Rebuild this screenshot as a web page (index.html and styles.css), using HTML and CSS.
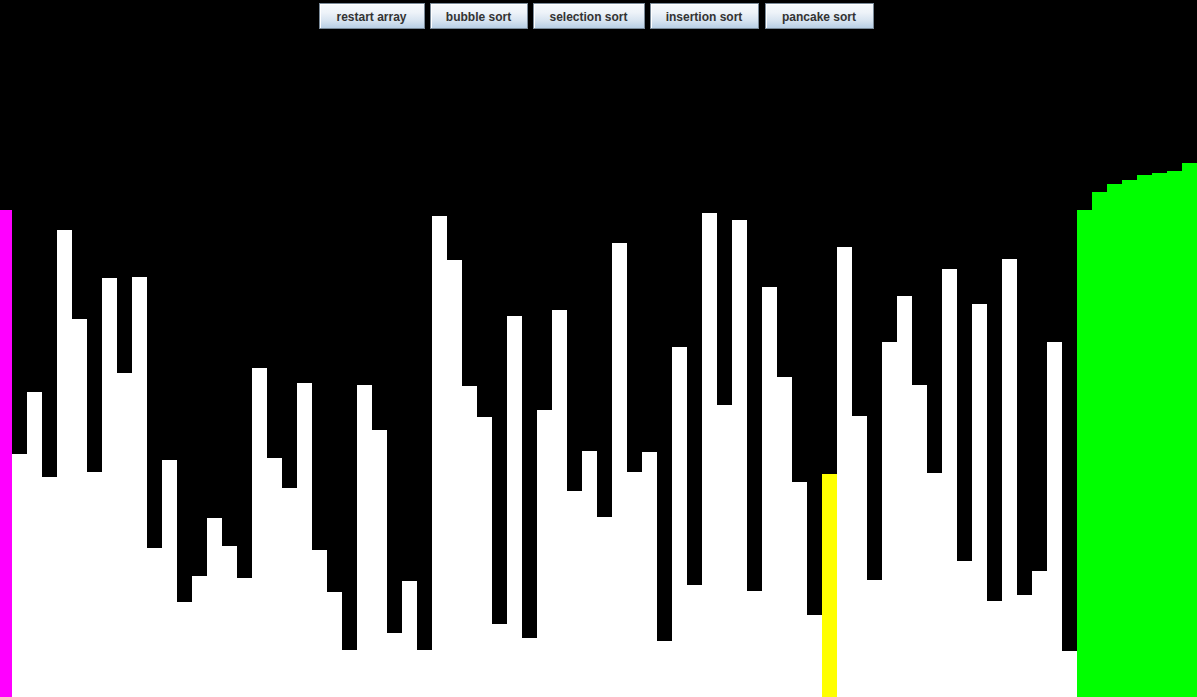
FILE: index.html
```html
<!DOCTYPE html>
<html>
<head>
<meta charset="utf-8">
<title>Sorting</title>
<link rel="stylesheet" href="styles.css">
</head>
<body>
<div class="page">
  <div class="toolbar">
    <button class="btn btn-restart">restart array</button>
    <button class="btn btn-bubble">bubble sort</button>
    <button class="btn btn-selection">selection sort</button>
    <button class="btn btn-insertion">insertion sort</button>
    <button class="btn btn-pancake">pancake sort</button>
  </div>
  <div class="chart">
    <div class="bar magenta" style="height:487px"></div>
    <div class="bar" style="height:243px"></div>
    <div class="bar" style="height:305px"></div>
    <div class="bar" style="height:220px"></div>
    <div class="bar" style="height:467px"></div>
    <div class="bar" style="height:378px"></div>
    <div class="bar" style="height:225px"></div>
    <div class="bar" style="height:419px"></div>
    <div class="bar" style="height:324px"></div>
    <div class="bar" style="height:420px"></div>
    <div class="bar" style="height:149px"></div>
    <div class="bar" style="height:237px"></div>
    <div class="bar" style="height:95px"></div>
    <div class="bar" style="height:121px"></div>
    <div class="bar" style="height:179px"></div>
    <div class="bar" style="height:151px"></div>
    <div class="bar" style="height:119px"></div>
    <div class="bar" style="height:329px"></div>
    <div class="bar" style="height:239px"></div>
    <div class="bar" style="height:209px"></div>
    <div class="bar" style="height:314px"></div>
    <div class="bar" style="height:147px"></div>
    <div class="bar" style="height:105px"></div>
    <div class="bar" style="height:47px"></div>
    <div class="bar" style="height:312px"></div>
    <div class="bar" style="height:267px"></div>
    <div class="bar" style="height:64px"></div>
    <div class="bar" style="height:116px"></div>
    <div class="bar" style="height:47px"></div>
    <div class="bar" style="height:481px"></div>
    <div class="bar" style="height:437px"></div>
    <div class="bar" style="height:311px"></div>
    <div class="bar" style="height:280px"></div>
    <div class="bar" style="height:73px"></div>
    <div class="bar" style="height:381px"></div>
    <div class="bar" style="height:59px"></div>
    <div class="bar" style="height:287px"></div>
    <div class="bar" style="height:387px"></div>
    <div class="bar" style="height:206px"></div>
    <div class="bar" style="height:246px"></div>
    <div class="bar" style="height:180px"></div>
    <div class="bar" style="height:454px"></div>
    <div class="bar" style="height:225px"></div>
    <div class="bar" style="height:245px"></div>
    <div class="bar" style="height:56px"></div>
    <div class="bar" style="height:350px"></div>
    <div class="bar" style="height:112px"></div>
    <div class="bar" style="height:484px"></div>
    <div class="bar" style="height:292px"></div>
    <div class="bar" style="height:477px"></div>
    <div class="bar" style="height:106px"></div>
    <div class="bar" style="height:410px"></div>
    <div class="bar" style="height:320px"></div>
    <div class="bar" style="height:215px"></div>
    <div class="bar" style="height:82px"></div>
    <div class="bar yellow" style="height:223px"></div>
    <div class="bar" style="height:450px"></div>
    <div class="bar" style="height:281px"></div>
    <div class="bar" style="height:117px"></div>
    <div class="bar" style="height:355px"></div>
    <div class="bar" style="height:401px"></div>
    <div class="bar" style="height:312px"></div>
    <div class="bar" style="height:224px"></div>
    <div class="bar" style="height:428px"></div>
    <div class="bar" style="height:136px"></div>
    <div class="bar" style="height:393px"></div>
    <div class="bar" style="height:96px"></div>
    <div class="bar" style="height:438px"></div>
    <div class="bar" style="height:102px"></div>
    <div class="bar" style="height:126px"></div>
    <div class="bar" style="height:355px"></div>
    <div class="bar" style="height:46px"></div>
    <div class="bar green" style="height:487px"></div>
    <div class="bar green" style="height:505px"></div>
    <div class="bar green" style="height:513px"></div>
    <div class="bar green" style="height:517px"></div>
    <div class="bar green" style="height:522px"></div>
    <div class="bar green" style="height:524px"></div>
    <div class="bar green" style="height:526px"></div>
    <div class="bar green" style="height:534px"></div>
  </div>
</div>
</body>
</html>
```

FILE: styles.css
```css
html, body {
  margin: 0;
  padding: 0;
  height: 100%;
  background: #000;
  overflow: hidden;
}

.page {
  height: 100vh;
  display: flex;
  flex-direction: column;
}

.toolbar {
  display: flex;
  justify-content: center;
  gap: 5px;
  padding: 3px 5px 0 0;
}

.btn {
  box-sizing: border-box;
  height: 26px;
  padding: 2px 0 0 0;
  margin: 0;
  border: 1px solid #7a8a99;
  border-radius: 0;
  box-shadow: inset 1px 1px 0 #ffffff;
  background: linear-gradient(to bottom, #f6f9fc 0%, #eef3f9 35%, #d6e3f0 70%, #b8cfe5 100%);
  color: #333333;
  font-family: "Liberation Sans", Arial, sans-serif;
  font-weight: bold;
  font-size: 12px;
  line-height: 22px;
  text-align: center;
  cursor: pointer;
}

.btn-restart { width: 106px; }
.btn-bubble { width: 98px; }
.btn-selection { width: 112px; }
.btn-insertion { width: 109px; }
.btn-pancake { width: 109px; margin-left: 1px; }

.chart {
  flex: 1;
  display: flex;
  align-items: flex-end;
  margin-left: -3px;
}

.bar {
  flex: 0 0 15px;
  width: 15px;
  background: #ffffff;
}

.bar.magenta {
  background: #ff00ff;
}

.bar.yellow {
  background: #ffff00;
}

.bar.green {
  background: #00ff00;
}
```
